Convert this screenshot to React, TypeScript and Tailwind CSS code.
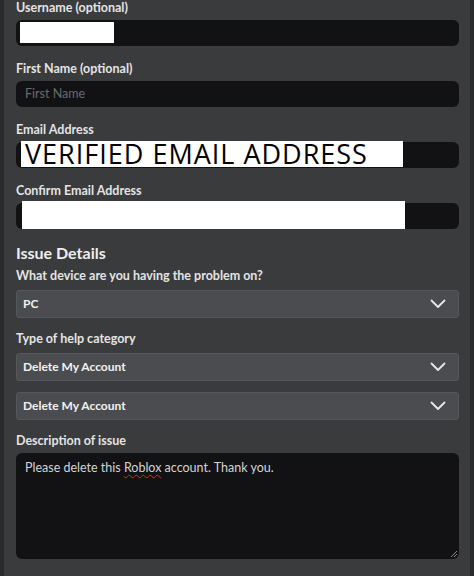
import React from 'react';

const font = { fontFamily: 'Lato, "Noto Sans", Arial, sans-serif' };

function Label({ children }: { children: React.ReactNode }) {
  return <div className="h-4 text-[12.5px] leading-4 font-bold text-[#e4e4e4] mb-1">{children}</div>;
}

function Chevron() {
  return (
    <svg width="16" height="10" viewBox="0 0 16 10" fill="none" className="shrink-0">
      <path d="M1.5 1.5 L8 8 L14.5 1.5" stroke="#e8e8e8" strokeWidth="1.8" strokeLinecap="round" strokeLinejoin="round" />
    </svg>
  );
}

function Select({ value }: { value: string }) {
  return (
    <div className="h-[28px] rounded-[3px] border border-[#55575a] bg-[#4a4c4f] flex items-center justify-between pl-[6px] pr-[12px]">
      <span className="text-[12px] font-bold text-[#f2f2f2]">{value}</span>
      <Chevron />
    </div>
  );
}

export default function App() {
  return (
    <div className="w-[474px] h-[576px] bg-[#2a2b2d] overflow-hidden" style={font}>
      <div className="ml-[4px] w-[466px] h-[576px] bg-[#393b3d] pl-[12px] pr-[11px]">
        {/* Account fields */}
        <Label>Username (optional)</Label>
        <div className="relative h-[26px] rounded-[6px] bg-[#121214] mb-[15px]">
          <div className="absolute left-[4px] top-[2px] w-[94px] h-[21px] bg-white" />
        </div>

        <Label>First Name (optional)</Label>
        <div className="h-[26px] rounded-[6px] bg-[#121214] mb-[15px] flex items-center px-[9px]">
          <span className="text-[12.5px] text-[#6a6a6c]">First Name</span>
        </div>

        <Label>Email Address</Label>
        <div className="relative h-[26px] rounded-[6px] bg-[#121214] mb-[15px]">
          <div className="absolute left-[5px] top-[-1px] w-[382px] h-[26px] bg-white flex items-center pl-[4px] overflow-hidden">
            <span className="text-[27px] leading-[26px] tracking-[1px] text-black whitespace-nowrap" style={{ fontFamily: '"Open Sans", sans-serif' }}>
              VERIFIED EMAIL ADDRESS
            </span>
          </div>
        </div>

        <Label>Confirm Email Address</Label>
        <div className="relative h-[26px] rounded-[6px] bg-[#121214] mb-[13px]">
          <div className="absolute left-[6px] top-[-2px] w-[383px] h-[28px] bg-white" />
        </div>

        {/* Issue Details */}
        <div className="h-[22px] text-[16px] leading-[22px] font-bold text-[#eeeeee] mb-[4px]">Issue Details</div>
        <div className="h-4 text-[12.5px] leading-4 font-bold text-[#e4e4e4] mb-[6px]">What device are you having the problem on?</div>
        <Select value="PC" />

        <div className="mt-[13px] h-4 text-[12.5px] leading-4 font-bold text-[#e4e4e4] mb-[6px]">Type of help category</div>
        <Select value="Delete My Account" />
        <div className="mt-[11px]">
          <Select value="Delete My Account" />
        </div>

        <div className="mt-[13px]">
          <Label>Description of issue</Label>
        </div>
        <div className="relative h-[106px] rounded-[6px] bg-[#121214] px-[9px] py-[6px]">
          <p className="text-[12.5px] text-[#d4d4d4]">
            Please delete this{' '}
            <span className="underline decoration-wavy decoration-[#c0392b] decoration-1 underline-offset-2">Roblox</span>{' '}
            account. Thank you.
          </p>
          <svg width="8" height="8" viewBox="0 0 8 8" className="absolute right-[1px] bottom-[1px]">
            <path d="M7 1 L1 7 M7 4 L4 7" stroke="#8a8a8a" strokeWidth="1" />
          </svg>
        </div>
      </div>
    </div>
  );
}
